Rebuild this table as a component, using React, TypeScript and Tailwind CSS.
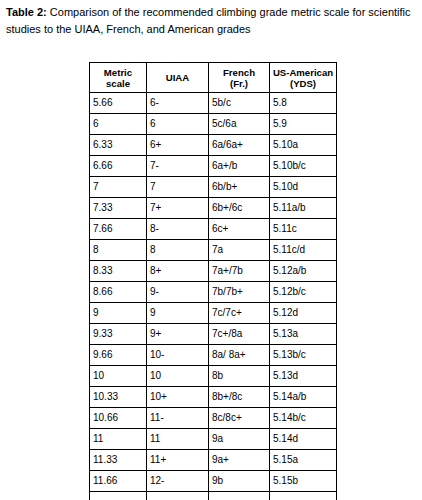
const rows: [string, string, string, string][] = [
  ["5.66", "6-", "5b/c", "5.8"],
  ["6", "6", "5c/6a", "5.9"],
  ["6.33", "6+", "6a/6a+", "5.10a"],
  ["6.66", "7-", "6a+/b", "5.10b/c"],
  ["7", "7", "6b/b+", "5.10d"],
  ["7.33", "7+", "6b+/6c", "5.11a/b"],
  ["7.66", "8-", "6c+", "5.11c"],
  ["8", "8", "7a", "5.11c/d"],
  ["8.33", "8+", "7a+/7b", "5.12a/b"],
  ["8.66", "9-", "7b/7b+", "5.12b/c"],
  ["9", "9", "7c/7c+", "5.12d"],
  ["9.33", "9+", "7c+/8a", "5.13a"],
  ["9.66", "10-", "8a/ 8a+", "5.13b/c"],
  ["10", "10", "8b", "5.13d"],
  ["10.33", "10+", "8b+/8c", "5.14a/b"],
  ["10.66", "11-", "8c/8c+", "5.14b/c"],
  ["11", "11", "9a", "5.14d"],
  ["11.33", "11+", "9a+", "5.15a"],
  ["11.66", "12-", "9b", "5.15b"],
];

const headers = [
  ["Metric", "scale"],
  ["UIAA"],
  ["French", "(Fr.)"],
  ["US-American", "(YDS)"],
];

export default function App() {
  return (
    <div className="min-h-screen bg-white text-black font-['Liberation_Sans',Arial,sans-serif]">
      <p className="whitespace-nowrap pl-[6px] pt-[4px] text-[11px] leading-[17px]">
        <span className="font-bold">Table 2:</span> Comparison of the recommended climbing grade metric scale for scientific
        <br />
        studies to the UIAA, French, and American grades
      </p>

      <div className="ml-[89px] mt-[24px] grid w-[248px] grid-cols-[57px_62px_61px_67px] border-l border-t border-black text-[10px]">
        {headers.map((h, i) => (
          <div
            key={i}
            className="box-border flex h-[30px] flex-col items-center justify-center border-b border-r border-black text-center text-[9.6px] font-bold leading-[11px]"
          >
            {h.map((line) => (
              <span key={line}>{line}</span>
            ))}
          </div>
        ))}

        {rows.map((r) =>
          r.map((cell, j) => (
            <div
              key={r[0] + "-" + j}
              className="box-border h-[21px] border-b border-r border-black pl-[3px] pt-[4px] leading-[12px]"
            >
              {cell}
            </div>
          ))
        )}

        {[0, 1, 2, 3].map((j) => (
          <div key={"tail-" + j} className="box-border h-[21px] border-r border-black" />
        ))}
      </div>
    </div>
  );
}
